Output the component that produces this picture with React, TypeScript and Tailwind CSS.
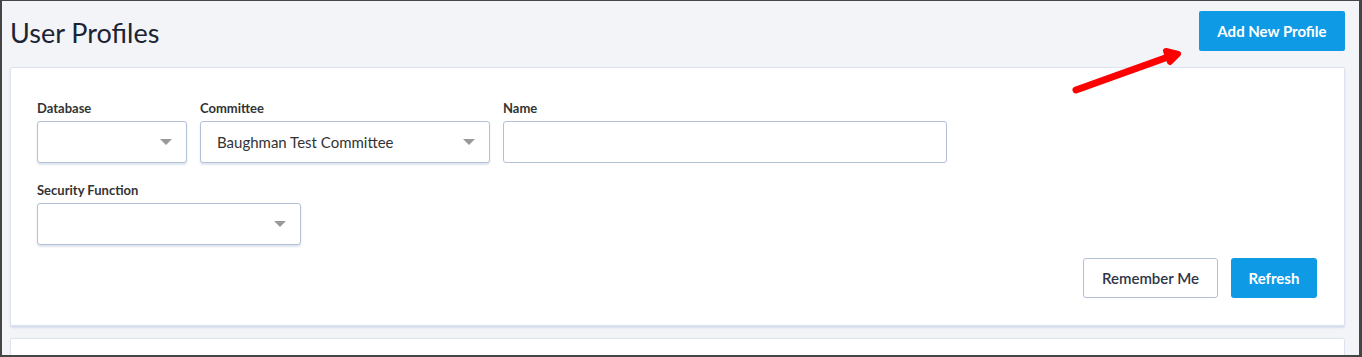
import React from "react";

function Caret() {
  return (
    <span className="absolute right-[14px] top-1/2 -translate-y-1/2 w-0 h-0 border-l-[6px] border-r-[6px] border-t-[6px] border-l-transparent border-r-transparent border-t-[#999]" />
  );
}

function Select({ width, value }: { width: string; value?: string }) {
  return (
    <div
      className={`relative ${width} h-[42px] bg-white border border-[#b3c0d8] rounded-[3px] shadow-[0_2px_2px_rgba(160,180,210,0.35)] flex items-center px-4 text-[15px] text-[#333]`}
    >
      {value}
      <Caret />
    </div>
  );
}

function Field({ label, children }: { label: string; children: React.ReactNode }) {
  return (
    <div className="flex flex-col gap-[5px]">
      <label className="text-[13px] leading-4 font-bold text-[#333]">{label}</label>
      {children}
    </div>
  );
}

export default function App() {
  return (
    <div
      className="relative w-[1362px] h-[357px] overflow-hidden bg-[#f3f4f8] border-t border-b-2 border-l-2 border-r-[3px] border-[#454545] px-2 pr-[14px]"
      style={{ fontFamily: "Lato, 'Open Sans', sans-serif" }}
    >
      {/* header */}
      <div className="flex items-center justify-between pt-[10px]">
        <h1 className="text-[27px] leading-8 text-[#1b2433] mt-1">User Profiles</h1>
        <button className="h-10 w-[146px] bg-[#0f9ae6] rounded-[2px] text-white font-bold text-[15px]">
          Add New Profile
        </button>
      </div>

      {/* filter card */}
      <div className="mt-4 bg-white border border-[#dce3ee] rounded-[2px] shadow-[0_2px_2px_rgba(180,195,220,0.45)] pt-[32px] pb-[27px] pl-[26px] pr-[27px]">
        <div className="flex gap-[13px]">
          <Field label="Database">
            <Select width="w-[150px]" />
          </Field>
          <Field label="Committee">
            <Select width="w-[290px]" value="Baughman Test Committee" />
          </Field>
          <Field label="Name">
            <div className="w-[444px] h-[42px] bg-white border border-[#b3c0d8] rounded-[3px]" />
          </Field>
        </div>
        <div className="mt-[19px] flex">
          <Field label="Security Function">
            <Select width="w-[264px]" />
          </Field>
        </div>
        <div className="mt-[13px] flex justify-end gap-[13px]">
          <button className="h-10 w-[135px] bg-white border border-[#b3c0d8] rounded-[3px] text-[15px] font-semibold text-[#2e3647]">
            Remember Me
          </button>
          <button className="h-10 w-[86px] bg-[#0f9ae6] rounded-[3px] text-white font-bold text-[15px]">
            Refresh
          </button>
        </div>
      </div>

      {/* next card */}
      <div className="mt-[12px] h-10 bg-white border border-[#dce3ee] rounded-[2px]" />

      {/* annotation arrow */}
      <svg className="absolute left-0 top-0 pointer-events-none" width="1362" height="357">
        <line x1="1074" y1="89" x2="1166" y2="56" stroke="#ff0000" strokeWidth="7" strokeLinecap="round" />
        <polygon points="1164,50 1176,53 1168,61" fill="#ff0000" stroke="#ff0000" strokeWidth="6" strokeLinejoin="round" />
      </svg>
    </div>
  );
}
